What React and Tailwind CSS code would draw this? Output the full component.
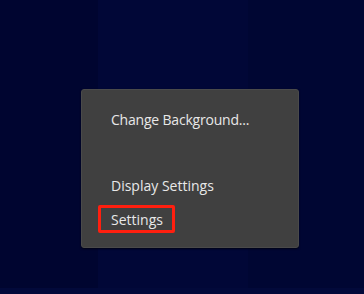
export default function App() {
  return (
    <div className="relative w-[364px] h-[294px] overflow-hidden bg-[#000530] font-['Open_Sans',sans-serif]">
      {/* faint wallpaper panels */}
      <div className="absolute inset-y-0 left-[98px] w-[150px] bg-[#010737]" />
      <div className="absolute inset-y-0 left-[248px] w-[116px] bg-[#000633]" />
      <div className="absolute inset-x-0 bottom-0 h-[6px] bg-[#02093a]" />

      <div className="absolute left-[81px] top-[89px] w-[218px] h-[159px] rounded-[3px] bg-[#404040] border border-[#4a4a4a] shadow-[0_1px_2px_rgba(0,0,0,0.6)] text-[14px] text-[#e8e8e8]">
        <div className="flex flex-col pt-[17px]">
          <div className="px-[29px] h-[26px] leading-[26px] tracking-[-0.2px]">Change Background...</div>
          <div className="h-[39px]" />
          <div className="px-[29px] h-[28px] leading-[28px]">Display Settings</div>
          <div className="px-[16px] pt-[5px]">
            <div className="w-[77px] h-[28px] leading-[24px] border-[3px] border-[#ff1f0f] rounded-[2px] px-[10px]">
              Settings
            </div>
          </div>
        </div>
      </div>
    </div>
  );
}
